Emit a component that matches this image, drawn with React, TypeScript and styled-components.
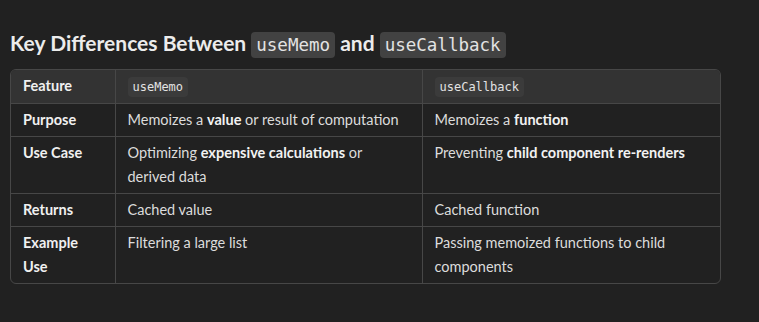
import styled, { createGlobalStyle } from "styled-components";

const GlobalStyle = createGlobalStyle`
    html, body {
        margin: 0;
        background: #212121;
    }
    body {
        font-family: Lato, "Noto Sans", sans-serif;
        color: #ececec;
    }
`;

const Page = styled.div`
    padding: 28px 38px 20px 10px;
`;

const Heading = styled.h3`
    margin: 0 0 9px;
    font-size: 21px;
    font-weight: 700;
    line-height: 30px;
    color: #ececec;
`;

const Code = styled.code<{ $small?: boolean }>`
    font-family: "DejaVu Sans Mono", "Liberation Mono", monospace;
    font-weight: 400;
    font-size: ${(p) => (p.$small ? "12px" : "17.5px")};
    background: ${(p) => (p.$small ? "#3b3b3b" : "#424242")};
    border-radius: 4px;
    padding: 3px 5px;
    color: #e3e3e3;
`;

const TableWrap = styled.div`
    border: 1px solid #474747;
    border-radius: 6px;
    overflow: hidden;
`;

const Table = styled.table`
    width: 100%;
    border-collapse: collapse;
    font-size: 14.5px;
    line-height: 24px;
`;

const HeadRow = styled.tr`
    background: #333333;
`;

const Cell = styled.td<{ $label?: boolean }>`
    padding: 4px 12px 4px;
    vertical-align: top;
    text-align: left;
    border-right: 1px solid #474747;
    border-bottom: 1px solid #474747;
    font-weight: ${(p) => (p.$label ? 700 : 400)};
    color: ${(p) => (p.$label ? "#f0f0f0" : "#dcdcdc")};

    &:last-child {
        border-right: none;
    }

    tr:last-child > & {
        border-bottom: none;
    }

    b {
        font-weight: 700;
        color: #f2f2f2;
    }
`;

const rows = [
    {
        label: "Purpose",
        memo: (
            <>
                Memoizes a <b>value</b> or result of computation
            </>
        ),
        callback: (
            <>
                Memoizes a <b>function</b>
            </>
        ),
    },
    {
        label: "Use Case",
        memo: (
            <>
                Optimizing <b>expensive calculations</b> or derived data
            </>
        ),
        callback: (
            <>
                Preventing <b>child component re-renders</b>
            </>
        ),
    },
    { label: "Returns", memo: "Cached value", callback: "Cached function" },
    {
        label: "Example Use",
        memo: "Filtering a large list",
        callback: "Passing memoized functions to child components",
    },
];

export default function App() {
    return (
        <>
            <GlobalStyle />
            <Page>
                <Heading>
                    Key Differences Between <Code>useMemo</Code> and <Code>useCallback</Code>
                </Heading>
                <TableWrap>
                    <Table>
                        <colgroup>
                            <col style={{ width: 104 }} />
                            <col style={{ width: 307 }} />
                            <col />
                        </colgroup>
                        <tbody>
                            <HeadRow>
                                <Cell $label>Feature</Cell>
                                <Cell>
                                    <Code $small>useMemo</Code>
                                </Cell>
                                <Cell>
                                    <Code $small>useCallback</Code>
                                </Cell>
                            </HeadRow>
                            {rows.map((row) => (
                                <tr key={row.label}>
                                    <Cell $label>{row.label}</Cell>
                                    <Cell>{row.memo}</Cell>
                                    <Cell>{row.callback}</Cell>
                                </tr>
                            ))}
                        </tbody>
                    </Table>
                </TableWrap>
            </Page>
        </>
    );
}
